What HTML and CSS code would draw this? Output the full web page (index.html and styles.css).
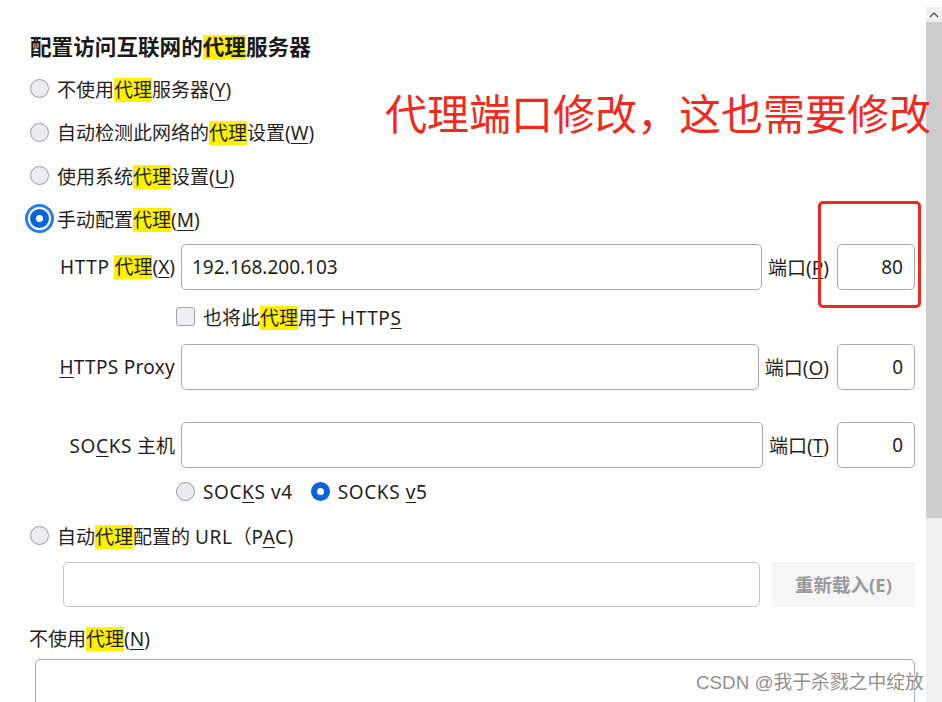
FILE: index.html
```html
<!DOCTYPE html>
<html lang="zh-CN">
<head>
<meta charset="utf-8">
<title>连接设置</title>
<link rel="stylesheet" href="styles.css">
</head>
<body>
<div class="page">
  <main class="content">
    <h1 class="title">配置访问互联网的<span class="hl">代理</span>服务器</h1>

    <div class="radio-row"><span class="radio"></span><span>不使用<span class="hl">代理</span>服务器(<u>Y</u>)</span></div>
    <div class="radio-row"><span class="radio"></span><span>自动检测此网络的<span class="hl">代理</span>设置(<u>W</u>)</span></div>
    <div class="radio-row"><span class="radio"></span><span>使用系统<span class="hl">代理</span>设置(<u>U</u>)</span></div>
    <div class="radio-row"><span class="radio checked focus"></span><span>手动配置<span class="hl">代理</span>(<u>M</u>)</span></div>

    <div class="field-row first">
      <label class="field-label"><span class="lat">HTTP</span> <span class="hl">代理</span>(<u>X</u>)</label>
      <div class="input"><span class="value">192.168.200.103</span></div>
      <label class="port-label">端口(<u>P</u>)</label>
      <div class="input port"><span class="value">80</span></div>
    </div>

    <div class="check-row">
      <span class="checkbox"></span><span>也将此<span class="hl">代理</span>用于 <span class="lat">HTTP<u>S</u></span></span>
    </div>

    <div class="field-row">
      <label class="field-label lat"><u>H</u>TTPS Proxy</label>
      <div class="input"></div>
      <label class="port-label">端口(<u>O</u>)</label>
      <div class="input port"><span class="value">0</span></div>
    </div>

    <div class="field-row socks">
      <label class="field-label"><span class="lat">SO<u>C</u>KS</span> 主机</label>
      <div class="input"></div>
      <label class="port-label">端口(<u>T</u>)</label>
      <div class="input port"><span class="value">0</span></div>
    </div>

    <div class="version-row">
      <span class="radio"></span><span class="lat">SOC<u>K</u>S v4</span>
      <span class="radio checked v5"></span><span class="lat">SOCKS <u>v</u>5</span>
    </div>

    <div class="radio-row pac"><span class="radio"></span><span>自动<span class="hl">代理</span>配置的 <span class="lat">URL</span>（<span class="lat">P<u>A</u>C</span>)</span></div>

    <div class="pac-row">
      <div class="input pac-input"></div>
      <div class="button">重新载入(E)</div>
    </div>

    <div class="noproxy-label">不使用<span class="hl">代理</span>(<u>N</u>)</div>
    <div class="textarea"></div>
  </main>
  <aside class="scrollbar">
    <div class="sb-arrow">
      <svg width="10" height="6" viewBox="0 0 10 6"><path d="M1 5 L5 1 L9 5" fill="none" stroke="#555" stroke-width="1.4"/></svg>
    </div>
    <div class="sb-thumb"></div>
    <div class="sb-track"></div>
  </aside>

  <div class="note">代理端口修改，这也需要修改</div>
  <div class="redbox"></div>
  <div class="watermark">CSDN @我于杀戮之中绽放</div>
</div>
</body>
</html>
```
FILE: styles.css
```css
* { box-sizing: border-box; }
html, body {
  margin: 0;
  padding: 0;
  height: 702px;
  overflow: hidden;
  background: #fff;
}
body {
  font-family: "Noto Sans", "Noto Sans CJK SC", sans-serif;
  font-size: 19px;
  color: #1f1f22;
}
u { text-decoration-thickness: 1px; text-underline-offset: 3px; }
.lat { letter-spacing: 0.6px; }

.page {
  position: relative;
  display: flex;
  height: 702px;
  overflow: hidden;
}
.content {
  width: 926px;
  padding: 0 11px 0 30px;
  overflow: hidden;
}

.title {
  margin: 32px 0 0 0;
  height: 30px;
  line-height: 30px;
  font-size: 21.6px;
  font-weight: 700;
  color: #1a1a1a;
}
.hl {
  display: inline-block;
  background: #fff000;
  line-height: 24px;
}

.radio-row {
  display: flex;
  align-items: center;
  gap: 8px;
  height: 43.33px;
}
.title + .radio-row { margin-top: 5.3px; }

.radio {
  flex: none;
  width: 19px;
  height: 19px;
  border-radius: 50%;
  border: 1px solid #9b9ba6;
  background: #ececef;
}
.radio.checked {
  border: 6px solid #0a63d8;
  background: #fff;
}
.radio.focus {
  box-shadow: 0 0 0 2px #fff, 0 0 0 5px #2a7de9;
}

.field-row {
  display: flex;
  align-items: center;
  height: 46px;
}
.field-row.first { margin-top: 3.3px; }
.field-row.socks { margin-top: 32px; }
.field-label {
  flex: none;
  width: 145px;
  text-align: right;
  white-space: nowrap;
}
.field-label.lat { letter-spacing: 0.3px; }
.input {
  height: 46px;
  border: 1px solid #a9a9b2;
  border-radius: 5px;
  background: #fff;
  display: flex;
  align-items: center;
}
.field-row .input { flex: 1; margin-left: 6px; }
.field-row .input.port {
  flex: none;
  width: 78px;
  margin-left: 8px;
  justify-content: flex-end;
  padding-right: 11px;
}
.value { padding-left: 10px; }
.port .value { padding-left: 0; }
.port-label {
  margin-left: 6px;
  white-space: nowrap;
}

.check-row {
  display: flex;
  align-items: center;
  gap: 8px;
  height: 54px;
  padding-left: 146px;
}
.checkbox {
  width: 19px;
  height: 19px;
  border: 1px solid #a4a4ad;
  border-radius: 3px;
  background: #eeeef1;
}

.version-row {
  display: flex;
  align-items: center;
  gap: 8px;
  height: 48px;
  padding-left: 146px;
}
.radio.v5 { margin-left: 10px; }

.radio-row.pac { height: 40px; }

.pac-row {
  display: flex;
  align-items: center;
  gap: 12px;
  margin-top: 6px;
  padding-left: 33px;
}
.pac-input {
  flex: 1;
  height: 45px;
  border-color: #c4c4cc;
}
.button {
  flex: none;
  width: 143px;
  height: 45px;
  background: #f6f6f6;
  color: #9a9a9a;
  font-weight: 700;
  font-size: 18.5px;
  display: flex;
  align-items: center;
  justify-content: center;
}

.noproxy-label {
  margin-top: 18px;
  height: 28px;
  line-height: 28px;
  margin-left: -1px;
}
.textarea {
  margin: 6px 0 0 5px;
  height: 120px;
  border: 1px solid #a9a9b2;
  border-radius: 5px;
}

.note {
  position: absolute;
  left: 385px;
  top: 88px;
  font-size: 42px;
  line-height: 52px;
  color: #f2281c;
  white-space: nowrap;
}
.redbox {
  position: absolute;
  left: 818px;
  top: 201px;
  width: 103px;
  height: 107px;
  border: 3px solid #ee2a20;
  border-radius: 5px;
}
.watermark {
  position: absolute;
  left: 696px;
  top: 669px;
  font-family: "Liberation Sans", "Noto Sans CJK SC", sans-serif;
  font-size: 18.8px;
  line-height: 28px;
  color: #8f8f8f;
  white-space: nowrap;
  text-shadow: 0 0 2px #fff, 0 0 2px #fff;
}

.scrollbar {
  flex: none;
  width: 16px;
  display: flex;
  flex-direction: column;
  padding-top: 7px;
}
.sb-arrow {
  height: 15px;
  background: #f0f0f0;
  display: flex;
  align-items: center;
  justify-content: center;
}
.sb-thumb {
  height: 496px;
  background: #cdcdcd;
}
.sb-track {
  flex: 1;
  background: #f0f0f0;
}
```
